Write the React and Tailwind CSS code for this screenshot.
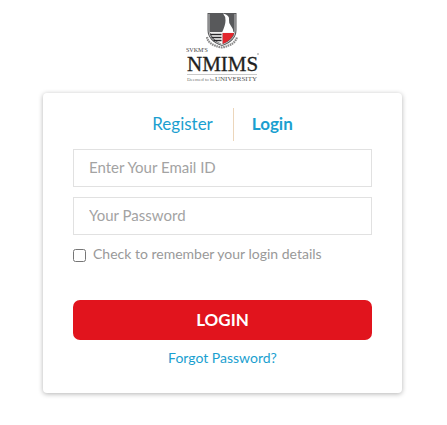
import { useState } from 'react';

const field =
  'h-[38px] w-full border border-[#e1e1e1] bg-white px-[15px] pb-[2px] text-[15px] text-[#555] placeholder:text-[#a3a3a3] outline-none focus:border-[#1b9fd0]';

function Logo() {
  return (
    <svg width="74" height="72" viewBox="0 0 74 72" role="img" aria-label="SVKM'S NMIMS University">
      {/* laurel */}
      <path d="M21 25 Q22 33 36 35.500 Q49 33 51 25" fill="none" stroke="#8a8a8a" strokeWidth="2.2" strokeDasharray="1.6 0.7" />
      {/* shield */}
      <path d="M21.500 1 H50.500 V18 Q50.500 29 36 34 Q21.500 29 21.500 18 Z" fill="#58595b" />
      <path d="M23 2 V19 Q23 28 36 32.800 Q49 28 49 19 V2" fill="none" stroke="#ddd" strokeWidth="0.8" />
      <path d="M24.500 21 H36 V32 Q26.500 28 24.500 21 Z" fill="#fff" />
      <path d="M24.500 22.500 H36 M25.500 25.500 H36 M27.500 28.500 H36" stroke="#29292b" strokeWidth="1.7" />
      <path d="M36.500 21 H48 Q46 28 36.500 32 Z" fill="#e3262d" />
      <path d="M37 1.500 Q44 3 43 8 Q42.500 11 45 14 Q47.500 17 47.500 20.500 H36 Q39.500 13 39.500 8.500 Q39.500 4 37 1.500 Z" fill="#fff" />
      <path d="M24 20.500 H48 M36 20.500 V32.500" stroke="#fff" strokeWidth="0.9" />
      <text x="0" y="40" fontSize="6" fill="#444" fontFamily="Liberation Serif, serif">SVKM'S</text>
      <text x="1" y="59" fontSize="21" fill="#1f1f21" stroke="#1f1f21" strokeWidth="0.3" fontFamily="Liberation Serif, serif">NMIMS</text>
      <circle cx="72" cy="42" r="0.8" fill="#888" />
      <path d="M1 62.500 H71" stroke="#bbb" strokeWidth="0.8" />
      <text x="1" y="69" fontSize="5" fill="#777" fontFamily="Liberation Serif, serif">Deemed to be</text>
      <text x="29" y="69" fontSize="7" fill="#555" fontFamily="Liberation Serif, serif">UNIVERSITY</text>
    </svg>
  );
}

export default function App() {
  const [email, setEmail] = useState('');
  const [password, setPassword] = useState('');
  const [remember, setRemember] = useState(false);

  return (
    <div className="min-h-screen bg-white pt-3 pr-[45px] pb-8 pl-[43px] font-['Lato',sans-serif]">
      <header className="flex h-[81px] justify-center">
        <Logo />
      </header>

      <main className="rounded-[4px] bg-white px-[30px] pt-[15px] pb-[25px] shadow-[0_1px_5px_rgba(0,0,0,0.3)]">
        <nav className="flex h-[33px] justify-center text-[17px] leading-8 text-[#1b9fd0]">
          <a href="#register" className="border-r border-[#ecd6bb] pr-5">
            Register
          </a>
          <a href="#login" aria-current="page" className="pl-[18px] font-bold">
            Login
          </a>
        </nav>

        <form className="mt-2" onSubmit={(e) => e.preventDefault()}>
          <div className="flex flex-col gap-[10px]">
            <input
              type="email"
              aria-label="Email ID"
              placeholder="Enter Your Email ID"
              value={email}
              onChange={(e) => setEmail(e.target.value)}
              className={field}
            />
            <input
              type="password"
              aria-label="Password"
              placeholder="Your Password"
              value={password}
              onChange={(e) => setPassword(e.target.value)}
              className={field}
            />
          </div>

          <label className="mt-2 flex h-5 items-center gap-[7px] text-[14px] whitespace-nowrap text-[#999]">
            <input
              type="checkbox"
              checked={remember}
              onChange={(e) => setRemember(e.target.checked)}
              className="mt-1 size-[13px] shrink-0"
            />
            Check to remember your login details
          </label>

          <button type="submit" className="mt-[37px] h-10 w-full rounded-[7px] bg-[#e1141d] text-[17px] font-bold text-white">
            LOGIN
          </button>
        </form>

        <p className="mt-2 text-center text-[14px] leading-5 text-[#1b9fd0]">
          <a href="#forgot">Forgot Password?</a>
        </p>
      </main>
    </div>
  );
}
